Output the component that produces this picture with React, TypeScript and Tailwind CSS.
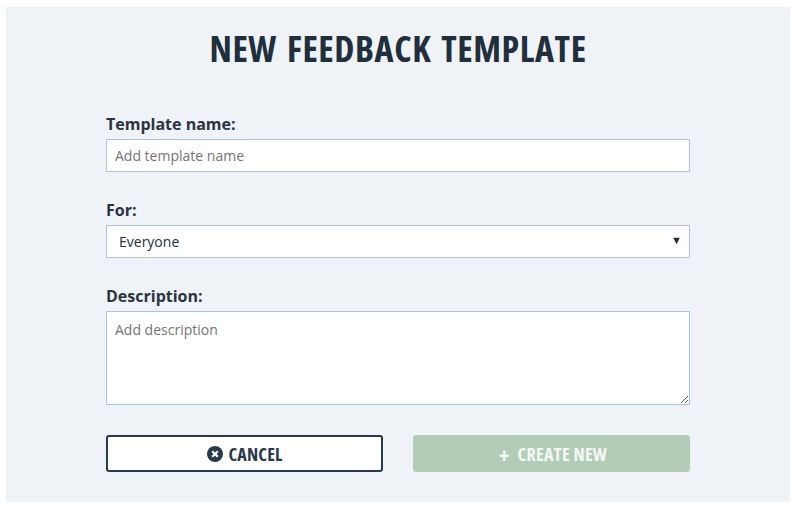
import React from 'react';

const sans = "font-['Open_Sans',sans-serif]";

const App: React.FC = () => {
  return (
    <div className={`w-[796px] h-[508px] bg-white p-[6px] pb-[6px] ${sans}`}>
      <div className="h-[495px] mt-[1px] bg-[#eff2f7] flex flex-col items-center">
        <h1 className="mt-[20px] h-[44px] text-[36px] leading-[44px] font-bold text-[#212f3d] tracking-[0.6px] [word-spacing:3px] [font-stretch:75%]">NEW FEEDBACK TEMPLATE</h1>
        <form className="mt-[42px] w-[584px] flex flex-col">
          <label className="text-[16px] leading-[22px] font-bold text-[#2a3440]">Template name:</label>
          <input
            className="mt-[4px] h-[33px] w-full bg-white border border-[#b5c4d4] px-[8px] text-[14px] text-[#212f3d] placeholder:text-[#757575] outline-none"
            placeholder="Add template name"
          />
          <label className="mt-[27px] text-[16px] leading-[22px] font-bold text-[#2a3440]">For:</label>
          <div className="relative mt-[4px] h-[33px] w-full bg-white border border-[#b5c4d4] pl-[12px] flex items-center text-[14px] text-[#212f3d]">
            Everyone
            <span className="absolute right-[7px] top-[6px] text-[11px] leading-[16px] text-[#212f3d]">▼</span>
          </div>
          <label className="mt-[27px] text-[16px] leading-[22px] font-bold text-[#2a3440]">Description:</label>
          <textarea
            className="mt-[4px] h-[94px] w-full bg-white border border-[#a9c4de] px-[8px] py-[8px] text-[14px] leading-[20px] text-[#212f3d] placeholder:text-[#757575] outline-none block"
            placeholder="Add description"
          />
          <div className="mt-[30px] flex justify-between">
            <button type="button" className="w-[277px] h-[37px] pt-[1px] bg-white border-2 border-[#2a3a4d] rounded-[3px] flex items-center justify-center gap-[6px] text-[#2a3a4d] text-[18px] tracking-[0.15px] font-bold [font-stretch:75%]">
              <svg width="16" height="16" viewBox="0 0 16 16">
                <circle cx="8" cy="8" r="8" fill="#2a3a4d" />
                <path d="M5.2 5.2l5.6 5.6M10.8 5.2l-5.6 5.6" stroke="#fff" strokeWidth="2.2" />
              </svg>
              CANCEL
            </button>
            <button type="button" className="w-[277px] h-[37px] pt-[1px] pl-[3px] bg-[#b3ccb8] rounded-[3px] flex items-center justify-center gap-[8px] text-white/85 text-[18px] tracking-[0.3px] font-bold [font-stretch:75%]">
              <span className="text-[22px] leading-none">+</span>
              CREATE NEW
            </button>
          </div>
        </form>
      </div>
    </div>
  );
};

export default App;
